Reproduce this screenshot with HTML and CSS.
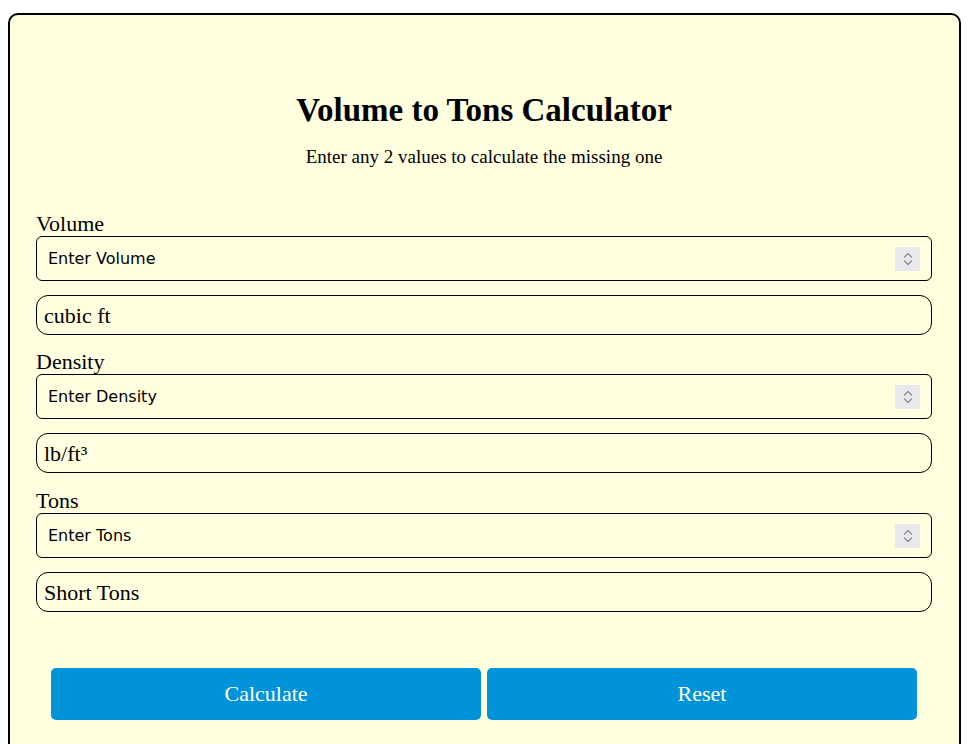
FILE: index.html
```html
<!DOCTYPE html>
<html lang="en">
<head>
<meta charset="utf-8">
<title>Volume to Tons Calculator</title>
<link rel="stylesheet" href="styles.css">
</head>
<body>
<div class="card">
  <h1 class="title">Volume to Tons Calculator</h1>
  <p class="subtitle">Enter any 2 values to calculate the missing one</p>

  <div class="group">
    <label class="label" for="volume">Volume</label>
    <div class="field">
      <input class="input" id="volume" type="text" placeholder="Enter Volume">
      <span class="spinner"><svg width="12" height="18" viewBox="0 0 12 18"><path d="M2.5 7 L6 3.5 L9.5 7 M2.5 11 L6 14.5 L9.5 11" fill="none" stroke="#8e8e9c" stroke-width="1.4" stroke-linecap="round" stroke-linejoin="round"/></svg></span>
    </div>
    <select class="select"><option>cubic ft</option></select>
  </div>

  <div class="group">
    <label class="label" for="density">Density</label>
    <div class="field">
      <input class="input" id="density" type="text" placeholder="Enter Density">
      <span class="spinner"><svg width="12" height="18" viewBox="0 0 12 18"><path d="M2.5 7 L6 3.5 L9.5 7 M2.5 11 L6 14.5 L9.5 11" fill="none" stroke="#8e8e9c" stroke-width="1.4" stroke-linecap="round" stroke-linejoin="round"/></svg></span>
    </div>
    <select class="select"><option>lb/ft³</option></select>
  </div>

  <div class="group group-last">
    <label class="label" for="tons">Tons</label>
    <div class="field">
      <input class="input" id="tons" type="text" placeholder="Enter Tons">
      <span class="spinner"><svg width="12" height="18" viewBox="0 0 12 18"><path d="M2.5 7 L6 3.5 L9.5 7 M2.5 11 L6 14.5 L9.5 11" fill="none" stroke="#8e8e9c" stroke-width="1.4" stroke-linecap="round" stroke-linejoin="round"/></svg></span>
    </div>
    <select class="select"><option>Short Tons</option></select>
  </div>

  <div class="buttons">
    <button class="btn" type="button">Calculate</button>
    <button class="btn" type="button">Reset</button>
  </div>
</div>
</body>
</html>
```
FILE: styles.css
```css
html, body {
  margin: 0;
  padding: 0;
  background: #ffffff;
}
body {
  padding: 13px 10px 0 8px;
  font-family: "Liberation Serif", "Times New Roman", serif;
  color: #000;
}
.card {
  background: #ffffe0;
  border: 2px solid #000;
  border-radius: 10px;
  padding: 76px 27px 40px 26px;
  min-height: 760px;
  box-sizing: border-box;
}
.title {
  margin: 0;
  text-align: center;
  font-size: 33px;
  font-weight: bold;
  line-height: 38px;
}
.subtitle {
  margin: 17px 0 0;
  text-align: center;
  font-size: 19px;
  line-height: 22px;
}
.group {
  display: flex;
  flex-direction: column;
  margin-bottom: 14px;
}
.group:first-of-type {
  margin-top: 43px;
}
.group-last {
  padding-top: 1px;
}
.label {
  font-size: 22px;
  line-height: 25px;
}
.field {
  position: relative;
}
.input {
  display: block;
  width: 100%;
  box-sizing: border-box;
  height: 45px;
  border: 1px solid #000;
  border-radius: 6px;
  background: #ffffe0;
  padding: 0 40px 0 11px;
  font-family: "DejaVu Sans", Verdana, sans-serif;
  font-size: 16px;
  color: #000;
  outline: none;
}
.input::placeholder {
  color: #000;
  opacity: 1;
}
.spinner {
  position: absolute;
  right: 12px;
  top: 11px;
  width: 25px;
  height: 24px;
  background: #e9e9ed;
  display: flex;
  align-items: center;
  justify-content: center;
}
.select {
  margin-top: 14px;
  height: 40px;
  width: 100%;
  box-sizing: border-box;
  border: 1px solid #000;
  border-radius: 12px;
  background: #ffffe0;
  padding: 0 7px;
  font-family: "Liberation Serif", "Times New Roman", serif;
  font-size: 22px;
  color: #000;
  appearance: none;
  -webkit-appearance: none;
  outline: none;
}
.buttons {
  display: flex;
  gap: 6px;
  padding: 0 15px;
  margin-top: 56px;
}
.btn {
  flex: 1;
  height: 52px;
  border: none;
  border-radius: 5px;
  background: #0093d9;
  color: #fff;
  font-family: "Liberation Serif", "Times New Roman", serif;
  font-size: 22px;
  cursor: pointer;
}
```
